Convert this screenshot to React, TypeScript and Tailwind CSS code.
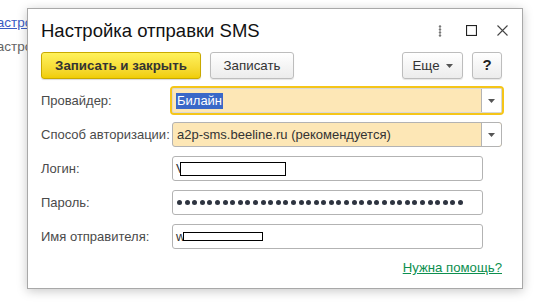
import React from "react";

const font = { fontFamily: '"Liberation Sans", Arial, sans-serif' };

function Arrow() {
  return (
    <svg width="7" height="4" viewBox="0 0 7 4" className="block">
      <path d="M0 0H7L3.5 4Z" fill="#555" />
    </svg>
  );
}

function Row({ label, children }: { label: string; children: React.ReactNode }) {
  return (
    <div className="flex items-center h-[25px]">
      <div className="w-[131px] shrink-0 whitespace-nowrap text-[13px] text-[#4a4a4a] leading-none">{label}</div>
      {children}
    </div>
  );
}

export default function App() {
  const dots = Array.from({ length: 38 });
  return (
    <div className="relative w-[556px] h-[303px] bg-white overflow-hidden" style={font}>
      {/* background page */}
      <div className="flex flex-col pt-[15px] ml-[-13px] text-[13.5px] leading-[16px] gap-[8px]">
        <span className="text-[#3b5cc4] underline">Настройки</span>
        <span className="text-[#666]">Настройки</span>
      </div>

      {/* dialog window */}
      <div className="absolute left-[27px] top-[8px] w-[496px] h-[281px] bg-white border border-[#a8a8a8] shadow-[0_2px_10px_rgba(0,0,0,0.22)] flex flex-col pl-[13px] pr-[20px]">
        {/* title */}
        <div className="flex items-center pt-[11px] h-[32px]">
          <div className="text-[18.5px] leading-[20px] text-[#111] flex-1">Настройка отправки SMS</div>
          <div className="flex items-center gap-[0px] mr-[-6px]">
            <svg width="4" height="12" viewBox="0 0 4 12" className="mr-[24px]">
              <circle cx="2" cy="1.5" r="1.2" fill="#777" />
              <circle cx="2" cy="4.5" r="1.2" fill="#777" />
              <circle cx="2" cy="7.5" r="1.2" fill="#777" />
              <circle cx="2" cy="10.5" r="1.2" fill="#777" />
            </svg>
            <svg width="11" height="11" viewBox="0 0 11 11" className="mr-[20px]">
              <rect x="0.5" y="0.5" width="10" height="10" fill="none" stroke="#222" strokeWidth="1.2" />
            </svg>
            <svg width="11" height="11" viewBox="0 0 11 11">
              <path d="M0.5 0.5L10.5 10.5M10.5 0.5L0.5 10.5" stroke="#444" strokeWidth="1.1" />
            </svg>
          </div>
        </div>

        {/* toolbar */}
        <div className="flex items-center mt-[11px] h-[27px] pr-[0px]">
          <button className="h-[27px] w-[160px] rounded-[3px] border border-[#c9a900] bg-gradient-to-b from-[#fff25a] to-[#f0cd00] text-[13.3px] font-bold text-[#333] shadow-[0_1px_1px_rgba(0,0,0,0.15)]">
            Записать и закрыть
          </button>
          <button className="ml-[9px] h-[27px] w-[84px] rounded-[3px] border border-[#bdbdbd] bg-gradient-to-b from-white to-[#ececec] text-[13.3px] text-[#333] shadow-[0_1px_1px_rgba(0,0,0,0.1)]">
            Записать
          </button>
          <div className="flex-1" />
          <button className="h-[27px] w-[61px] rounded-[3px] border border-[#bdbdbd] bg-gradient-to-b from-white to-[#ececec] text-[13.3px] text-[#333] flex items-center justify-center gap-[6px] shadow-[0_1px_1px_rgba(0,0,0,0.1)]">
            <span>Еще</span>
            <Arrow />
          </button>
          <button className="ml-[9px] h-[27px] w-[30px] rounded-[3px] border border-[#bdbdbd] bg-gradient-to-b from-white to-[#ececec] text-[15px] font-bold text-[#222] shadow-[0_1px_1px_rgba(0,0,0,0.1)]">
            ?
          </button>
        </div>

        {/* form */}
        <div className="flex flex-col gap-[9px] mt-[9px]">
          <Row label="Провайдер:">
            <div className="w-[331px] h-[25px] rounded-[2px] border border-[#d8d8d8] bg-[#fde7b6] flex outline outline-[2.5px] outline-offset-[0.5px] outline-[#f5c518]">
              <div className="flex-1 flex items-center pl-[3px]">
                <span className="bg-[#3a68c8] text-white text-[13px] leading-[16px] px-[1px]">Билайн</span>
              </div>
              <div className="w-[20px] bg-white border-l border-[#b3b3b3] flex items-center justify-center">
                <Arrow />
              </div>
            </div>
          </Row>
          <Row label="Способ авторизации:">
            <div className="w-[331px] h-[25px] rounded-[3px] border border-[#b3b3b3] bg-[#fde7b6] flex">
              <div className="flex-1 flex items-center pl-[4px] text-[13px] text-[#333]">a2p-sms.beeline.ru (рекомендуется)</div>
              <div className="w-[20px] bg-white rounded-r-[3px] border-l border-[#b3b3b3] flex items-center justify-center">
                <Arrow />
              </div>
            </div>
          </Row>
          <Row label="Логин:">
            <div className="w-[311px] h-[25px] rounded-[3px] border border-[#b3b3b3] bg-white flex items-center pl-[3px] text-[13px] text-[#333]">
              <span>V</span>
              <span className="ml-[-5px] w-[106px] h-[14px] border border-black bg-white" />
            </div>
          </Row>
          <Row label="Пароль:">
            <div className="w-[311px] h-[25px] rounded-[3px] border border-[#b3b3b3] bg-white flex items-center pl-[4px] gap-[2.6px]">
              {dots.map((_, i) => (
                <span key={i} className="w-[5px] h-[5px] rounded-full bg-[#2e3440]" />
              ))}
            </div>
          </Row>
          <Row label="Имя отправителя:">
            <div className="w-[311px] h-[25px] rounded-[3px] border border-[#b3b3b3] bg-white flex items-center pl-[3px] text-[13px] text-[#333]">
              <span>w</span>
              <span className="ml-[-2px] w-[80px] h-[9px] border border-black bg-white" />
            </div>
          </Row>
        </div>

        <div className="flex justify-end mt-[11px]">
          <a className="text-[13.2px] leading-[16px] text-[#0d8f4f] underline">Нужна помощь?</a>
        </div>
      </div>
    </div>
  );
}
